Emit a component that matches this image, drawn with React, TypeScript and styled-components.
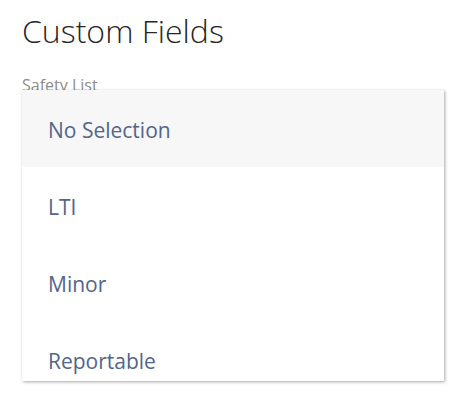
import React from "react";
import styled, { createGlobalStyle } from "styled-components";

const GlobalStyle = createGlobalStyle`
  html, body {
    margin: 0;
    padding: 0;
    background: #ffffff;
  }
  body {
    font-family: "Open Sans", "Noto Sans", sans-serif;
  }
`;

const Page = styled.div`
  padding: 11px 22px 0 22px;
  width: 474px;
  height: 405px;
  box-sizing: border-box;
`;

const Title = styled.h1`
  margin: 0;
  font-size: 32px;
  font-weight: 300;
  line-height: 40px;
  color: #262626;
`;

const Field = styled.div`
  position: relative;
  margin-top: 24px;
`;

const Label = styled.label`
  display: block;
  font-size: 16px;
  line-height: 20px;
  color: #8c8c8c;
`;

const Menu = styled.ul`
  position: absolute;
  top: 15px;
  left: 0;
  width: 422px;
  height: 291px;
  margin: 0;
  padding: 0;
  list-style: none;
  overflow: hidden;
  background: #ffffff;
  box-shadow: 1px 1px 3px rgba(0, 0, 0, 0.35);
`;

const Option = styled.li<{ $active?: boolean }>`
  height: 77px;
  box-sizing: border-box;
  padding: 3px 0 0 26px;
  display: flex;
  align-items: center;
  font-size: 21px;
  font-weight: 400;
  color: #52658a;
  background: ${(p) => (p.$active ? "#f7f7f7" : "#ffffff")};
`;

const options = ["No Selection", "LTI", "Minor", "Reportable"];

export default function App() {
  return (
    <Page>
      <GlobalStyle />
      <Title>Custom Fields</Title>
      <Field>
        <Label>Safety List</Label>
        <Menu>
          {options.map((o, i) => (
            <Option key={o} $active={i === 0}>
              {o}
            </Option>
          ))}
        </Menu>
      </Field>
    </Page>
  );
}
